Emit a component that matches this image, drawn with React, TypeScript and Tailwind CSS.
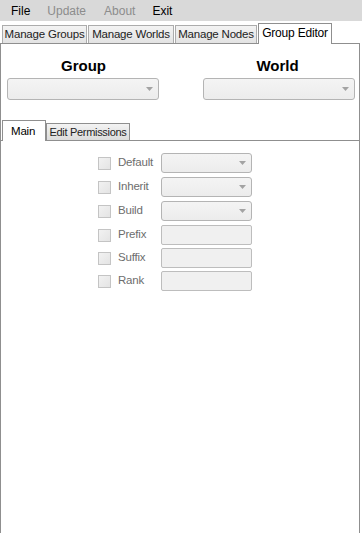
import React from "react";

const font = { fontFamily: '"Liberation Sans", Arial, sans-serif' };

function Arrow() {
  return (
    <svg width="7" height="4" viewBox="0 0 7 4" className="block">
      <path d="M0 0 H7 L3.5 4 Z" fill="#a3a3a3" />
    </svg>
  );
}

function Combo({ className }: { className: string }) {
  return (
    <div
      className={
        "flex shrink-0 items-center justify-end rounded-[3px] border border-[#b4b4b4] bg-gradient-to-b from-[#f4f4f4] to-[#ececec] pr-[5px] " +
        className
      }
    >
      <Arrow />
    </div>
  );
}

function TextBox() {
  return <div className="h-[20px] w-[91px] shrink-0 rounded-[2px] border border-[#bdbdbd] bg-[#f0f0f0]" />;
}

function Row({ label, combo, mt }: { label: string; combo: boolean; mt: string }) {
  return (
    <div className={"flex items-center " + mt}>
      <div className="ml-[97px] h-[13px] w-[13px] shrink-0 border border-[#c4c4c4] bg-gradient-to-br from-[#f2f2f2] to-[#e4e4e4]" />
      <span className="ml-[7px] w-[43px] shrink-0 whitespace-nowrap text-[11.5px] tracking-[-0.2px] text-[#6d6d6d]">
        {label}
      </span>
      {combo ? <Combo className="h-[20px] w-[91px]" /> : <TextBox />}
    </div>
  );
}

export default function App() {
  const tabs = [
    { t: "Manage Groups", w: "w-[85px]" },
    { t: "Manage Worlds", w: "w-[86px]" },
    { t: "Manage Nodes", w: "w-[82px]" },
  ];
  return (
    <div className="h-[533px] w-[362px] overflow-hidden bg-white text-black" style={font}>
      <div className="flex h-[21px] items-center bg-[#d9d9d9] text-[12px]">
        <span className="ml-[11px]">File</span>
        <span className="ml-[17px] text-[#8c8c8c]">Update</span>
        <span className="ml-[18px] text-[#8c8c8c]">About</span>
        <span className="ml-[17px]">Exit</span>
      </div>

      <div className="mt-[2px] flex h-[20px] items-end whitespace-nowrap pl-[2px] text-[11.5px] tracking-[-0.2px]">
        {tabs.map(({ t, w }) => (
          <div
            key={t}
            className={
              "mr-px flex h-[18px] shrink-0 items-center justify-center border border-b-0 border-[#acacac] bg-gradient-to-b from-[#f3f3f3] to-[#e3e3e3] text-[#222] " +
              w
            }
          >
            {t}
          </div>
        ))}
        <div className="relative z-10 -mb-px flex h-[21px] w-[74px] shrink-0 items-center justify-center border border-b-0 border-[#8f8f8f] bg-white pb-[2px] text-[12px]">
          Group Editor
        </div>
      </div>

      <div className="flex h-[490px] w-[360px] flex-col border-x border-t border-[#8f8f8f]">
        <div className="mt-[12px] flex">
          <div className="flex w-[163px] flex-col items-center">
            <span className="pl-[2px] text-[15px] font-bold leading-[20px]">Group</span>
          </div>
          <div className="ml-[32px] flex w-[163px] flex-col items-center">
            <span className="text-[15px] font-bold leading-[20px]">World</span>
          </div>
        </div>
        <div className="mt-[2px] flex">
          <Combo className="ml-[6px] h-[22px] w-[152px]" />
          <Combo className="ml-[44px] h-[22px] w-[152px]" />
        </div>

        <div className="mt-[19px] flex h-[21px] items-end whitespace-nowrap text-[11.5px] tracking-[-0.2px]">
          <div className="relative z-10 -mb-px ml-px flex h-[21px] w-[44px] shrink-0 items-start border border-b-0 border-[#8f8f8f] bg-white pl-[8px] pt-[2px]">
            Main
          </div>
          <div className="flex h-[17px] w-[84px] shrink-0 items-center justify-center border border-b-0 border-[#8f8f8f] bg-gradient-to-b from-[#f3f3f3] to-[#dcdcdc] text-[11px] tracking-[-0.3px] text-[#222]">
            Edit Permissions
          </div>
        </div>
        <div className="flex-1 border-t border-[#8f8f8f]">
          <Row label="Default" combo mt="mt-[12px]" />
          <Row label="Inherit" combo mt="mt-[4px]" />
          <Row label="Build" combo mt="mt-[4px]" />
          <Row label="Prefix" combo={false} mt="mt-[4px]" />
          <Row label="Suffix" combo={false} mt="mt-[3px]" />
          <Row label="Rank" combo={false} mt="mt-[3px]" />
        </div>
      </div>
    </div>
  );
}
